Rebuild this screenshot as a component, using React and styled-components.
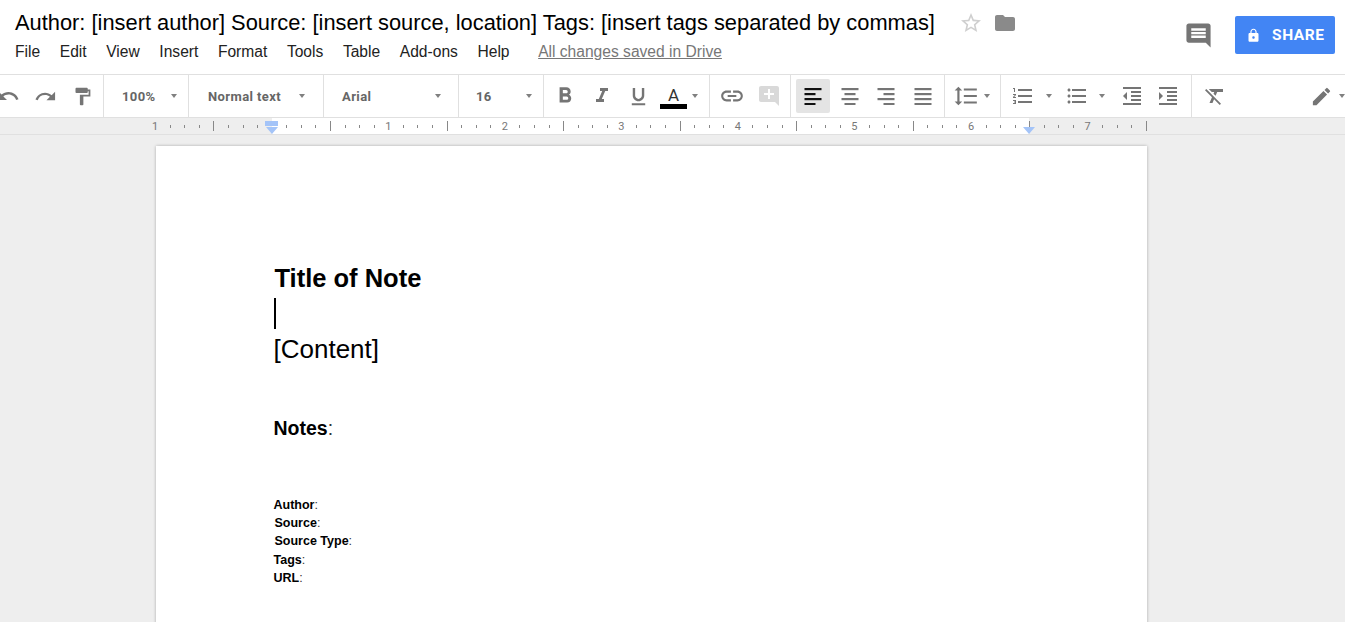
import React from "react";
import styled, { createGlobalStyle } from "styled-components";
import {
  MdUndo, MdRedo, MdFormatPaint, MdFormatBold, MdFormatItalic, MdFormatUnderlined,
  MdLink, MdAddComment, MdFormatLineSpacing, MdFormatListNumbered, MdFormatListBulleted,
  MdFormatIndentDecrease, MdFormatIndentIncrease, MdFormatClear, MdEdit, MdLock,
  MdInsertComment, MdStarBorder, MdFolder,
} from "react-icons/md";

const GlobalStyle = createGlobalStyle`
  html, body {
    margin: 0;
    height: 100%;
    overflow: hidden;
    background: #eeeeee;
    font-family: "Liberation Sans", Arial, sans-serif;
  }
`;

const Header = styled.header`
  height: 74px;
  background: #fff;
  border-bottom: 1px solid #e0e0e0;
  display: flex;
  justify-content: space-between;
`;

const HeaderLeft = styled.div`
  padding: 9px 0 0 15px;
`;

const TitleRow = styled.div`
  display: flex;
  align-items: center;
  height: 27px;
`;

const DocTitle = styled.div`
  font-size: 21.85px;
  color: #000;
  white-space: nowrap;
  width: 944px;
`;

const TitleIcon = styled.span`
  display: flex;
  width: 34px;
  color: ${(p) => p.$color};
`;

const MenuBar = styled.nav`
  display: flex;
  margin-top: 7px;
  font-size: 15.6px;
  color: #222;
`;

const MenuItem = styled.span`
  margin-right: 19.6px;
  line-height: 18px;
`;

const SavedLink = styled.a`
  margin-left: 9px;
  color: #777;
  text-decoration: underline;
  line-height: 18px;
`;

const HeaderRight = styled.div`
  display: flex;
  align-items: flex-start;
  padding: 16px 10px 0 0;
`;

const CommentBtn = styled.span`
  display: flex;
  color: #757575;
  margin: 5px 22px 0 0;
`;

const ShareButton = styled.button`
  width: 100px;
  height: 38px;
  background: #4285f4;
  border: 0;
  border-radius: 2px;
  color: #fff;
  font-family: Roboto, sans-serif;
  font-size: 15.5px;
  letter-spacing: 0.6px;
  font-weight: 700;
  display: flex;
  align-items: center;
  padding: 0 0 0 11px;
  gap: 11px;
`;

const Toolbar = styled.div`
  height: 42px;
  background: #fff;
  border-bottom: 1px solid #e0e0e0;
  display: flex;
  overflow: hidden;
`;

const Group = styled.div`
  width: ${(p) => p.$w}px;
  flex: none;
  height: 100%;
  box-sizing: border-box;
  border-right: ${(p) => (p.$last ? "0" : "1px solid #e0e0e0")};
  display: flex;
  align-items: center;
  padding-left: ${(p) => p.$pad || 0}px;
`;

const ToolIcon = styled.span`
  width: ${(p) => p.$w || 36.5}px;
  height: 34px;
  flex: none;
  display: flex;
  align-items: center;
  justify-content: center;
  margin-left: ${(p) => p.$ml || 0}px;
  color: ${(p) => p.$color || "#757575"};
  background: ${(p) => (p.$active ? "#e4e4e4" : "transparent")};
  border-radius: 2px;
  svg {
    flex: none;
  }
`;

const Caret = styled.i`
  flex: none;
  width: 0;
  height: 0;
  border: 3.5px solid transparent;
  border-top: 4px solid #808080;
  border-bottom: 0;
  margin-left: ${(p) => p.$ml || 0}px;
  margin-right: ${(p) => p.$mr || 0}px;
`;

const SelectLabel = styled.span`
  width: ${(p) => p.$w}px;
  flex: none;
  font-family: Roboto, sans-serif;
  font-size: 13px;
  letter-spacing: 0.4px;
  font-weight: 700;
  color: #666;
  white-space: nowrap;
`;

const ColorIcon = styled.span`
  width: 28px;
  flex: none;
  margin-left: 3px;
  display: flex;
  flex-direction: column;
  align-items: center;
  font-family: Roboto, sans-serif;
  font-size: 17px;
  line-height: 18px;
  color: #333;
  padding-top: 2px;
`;

const ColorBar = styled.span`
  width: 27px;
  height: 5px;
  background: #000;
`;

const Ruler = styled.div`
  position: relative;
  height: 16px;
  background: #eeeeee;
  border-bottom: 1px solid #e0e0e0;
  display: flex;
`;

const RulerSide = styled.div`
  width: ${(p) => p.$w}px;
  flex: none;
  background: ${(p) => (p.$white ? "#fff" : "transparent")};
`;

const Tick = styled.span`
  position: absolute;
  width: 1px;
  top: ${(p) => (p.$long ? 3 : 7)}px;
  height: ${(p) => (p.$long ? 10 : 3)}px;
  background: #888;
`;

const RulerNum = styled.span`
  position: absolute;
  top: 2px;
  width: 12px;
  margin-left: -6px;
  text-align: center;
  font-family: Roboto, sans-serif;
  font-size: 11px;
  line-height: 13px;
  color: #777;
`;

const IndentMark = styled.span`
  position: absolute;
  top: 9px;
  width: 0;
  height: 0;
  margin-left: -6.5px;
  border: 6.5px solid transparent;
  border-top: 7px solid #a4c4f8;
  border-bottom: 0;
  &::before {
    content: ${(p) => (p.$bar ? '""' : "none")};
    position: absolute;
    left: -6.5px;
    top: -13px;
    width: 13px;
    height: 5px;
    background: #a4c4f8;
  }
`;

const Canvas = styled.main`
  padding: 11px 0 0 156px;
  height: 487px;
  overflow: hidden;
  box-sizing: border-box;
`;

const Page = styled.article`
  width: 991px;
  height: 600px;
  box-sizing: border-box;
  background: #fff;
  box-shadow: 0 0 3px rgba(0, 0, 0, 0.28);
  padding: 117px 0 0 117.5px;
  color: #000;
`;

const NoteTitle = styled.div`
  font-size: 25.5px;
  font-weight: 700;
  line-height: 30px;
  padding-left: 1px;
`;

const Cursor = styled.div`
  width: 2px;
  height: 31px;
  background: #000;
  margin-top: 5px;
`;

const ContentLine = styled.div`
  font-size: 26px;
  line-height: 30px;
  margin-top: 5px;
`;

const NotesLine = styled.div`
  font-size: 19.5px;
  line-height: 24px;
  margin-top: 52px;
  color: #333;
  b {
    font-weight: 700;
    color: #000;
  }
`;

const MetaList = styled.div`
  margin-top: 56px;
  font-size: 12.5px;
  line-height: 18.2px;
  color: #333;
  b {
    font-weight: 700;
    color: #000;
  }
`;

const MetaRow = styled.div`
  padding-left: ${(p) => p.$ml || 0}px;
`;

// four-line alignment glyph, lines are wide / narrow in turn
const AlignIcon = ({ align, color = "currentColor" }) => {
  const narrow = align === "justify" ? 17 : 11;
  const nx = align === "center" ? 3 : align === "right" ? 6 : 0;
  return (
    <svg width="18" height="18" viewBox="0 0 17 18" fill={color}>
      <rect x="0" y="1" width="17" height="2.2" />
      <rect x={nx} y="6" width={narrow} height="2.2" />
      <rect x="0" y="11" width="17" height="2.2" />
      <rect x={nx} y="16" width={narrow} height="2.2" />
    </svg>
  );
};

const menus = ["File", "Edit", "View", "Insert", "Format", "Tools", "Table", "Add-ons", "Help"];
const INCH = 116.55;
const ZERO = 271.7;

const ticks = [];
for (let i = -7; i <= 60; i++) {
  const x = ZERO + (i * INCH) / 8;
  if (i % 8 === 0) continue; // number goes here
  ticks.push({ x, long: i % 4 === 0 });
}

const App = () => {
  return (
    <>
      <GlobalStyle />
      <Header>
        <HeaderLeft>
          <TitleRow>
            <DocTitle>Author: [insert author] Source: [insert source, location] Tags: [insert tags separated by commas]</DocTitle>
            <TitleIcon $color="#cfcfcf"><MdStarBorder size={24} /></TitleIcon>
            <TitleIcon $color="#8a8a8a"><MdFolder size={24} /></TitleIcon>
          </TitleRow>
          <MenuBar>
            {menus.map((m) => (
              <MenuItem key={m}>{m}</MenuItem>
            ))}
            <SavedLink>All changes saved in Drive</SavedLink>
          </MenuBar>
        </HeaderLeft>
        <HeaderRight>
          <CommentBtn><MdInsertComment size={29} /></CommentBtn>
          <ShareButton><MdLock size={15} />SHARE</ShareButton>
        </HeaderRight>
      </Header>

      <Toolbar>
        <Group $w={104}>
          <ToolIcon $w={26} $ml={-5}><MdUndo size={24} /></ToolIcon>
          <ToolIcon $w={37} $ml={6}><MdRedo size={23} /></ToolIcon>
          <ToolIcon $w={37}><MdFormatPaint size={21} /></ToolIcon>
        </Group>
        <Group $w={85} $pad={18}>
          <SelectLabel $w={49}>100%</SelectLabel>
          <Caret />
        </Group>
        <Group $w={135} $pad={19}>
          <SelectLabel $w={91}>Normal text</SelectLabel>
          <Caret />
        </Group>
        <Group $w={135} $pad={18}>
          <SelectLabel $w={93}>Arial</SelectLabel>
          <Caret />
        </Group>
        <Group $w={85} $pad={17}>
          <SelectLabel $w={50}>16</SelectLabel>
          <Caret />
        </Group>
        <Group $w={166} $pad={3}>
          <ToolIcon><MdFormatBold size={26} /></ToolIcon>
          <ToolIcon><MdFormatItalic size={24} /></ToolIcon>
          <ToolIcon><MdFormatUnderlined size={23} /></ToolIcon>
          <ColorIcon>A<ColorBar /></ColorIcon>
          <Caret $ml={4} />
        </Group>
        <Group $w={81} $pad={4}>
          <ToolIcon><MdLink size={26} /></ToolIcon>
          <ToolIcon $color="#d9d9d9"><MdAddComment size={24} /></ToolIcon>
        </Group>
        <Group $w={154} $pad={5}>
          <ToolIcon $w={34} $active $color="#111"><AlignIcon align="left" /></ToolIcon>
          <ToolIcon $w={39}><AlignIcon align="center" /></ToolIcon>
          <ToolIcon $w={34}><AlignIcon align="right" /></ToolIcon>
          <ToolIcon $w={39}><AlignIcon align="justify" /></ToolIcon>
        </Group>
        <Group $w={56} $pad={3}>
          <ToolIcon $w={36}><MdFormatLineSpacing size={26} /></ToolIcon>
          <Caret />
        </Group>
        <Group $w={191} $pad={4}>
          <ToolIcon $w={36}><MdFormatListNumbered size={24} /></ToolIcon>
          <Caret $ml={5} $mr={2} />
          <ToolIcon $w={45}><MdFormatListBulleted size={24} /></ToolIcon>
          <Caret />
          <ToolIcon $w={54}><MdFormatIndentDecrease size={24} /></ToolIcon>
          <ToolIcon $w={18}><MdFormatIndentIncrease size={24} /></ToolIcon>
        </Group>
        <Group $w={118} $last $pad={5}>
          <ToolIcon><MdFormatClear size={24} /></ToolIcon>
        </Group>
        <Group $w={38} $last $pad={0}>
          <ToolIcon $w={22}><MdEdit size={23} /></ToolIcon>
          <Caret $ml={7} />
        </Group>
      </Toolbar>

      <Ruler>
        <RulerSide $w={272} />
        <RulerSide $w={757} $white />
        {ticks.map((t) => (
          <Tick key={t.x} $long={t.long} style={{ left: t.x }} />
        ))}
        {[-1, 1, 2, 3, 4, 5, 6, 7].map((n) => (
          <RulerNum key={n} style={{ left: ZERO + n * INCH }}>{Math.abs(n)}</RulerNum>
        ))}
        <IndentMark $bar style={{ left: 272 }} />
        <IndentMark style={{ left: 1029 }} />
      </Ruler>

      <Canvas>
        <Page>
          <NoteTitle>Title of Note</NoteTitle>
          <Cursor />
          <ContentLine>[Content]</ContentLine>
          <NotesLine><b>Notes</b>:</NotesLine>
          <MetaList>
            <MetaRow><b>Author</b>:</MetaRow>
            <MetaRow $ml={1}><b>Source</b>:</MetaRow>
            <MetaRow $ml={1}><b>Source Type</b>:</MetaRow>
            <MetaRow><b>Tags</b>:</MetaRow>
            <MetaRow><b>URL</b>:</MetaRow>
          </MetaList>
        </Page>
      </Canvas>
    </>
  );
};

export default App;
